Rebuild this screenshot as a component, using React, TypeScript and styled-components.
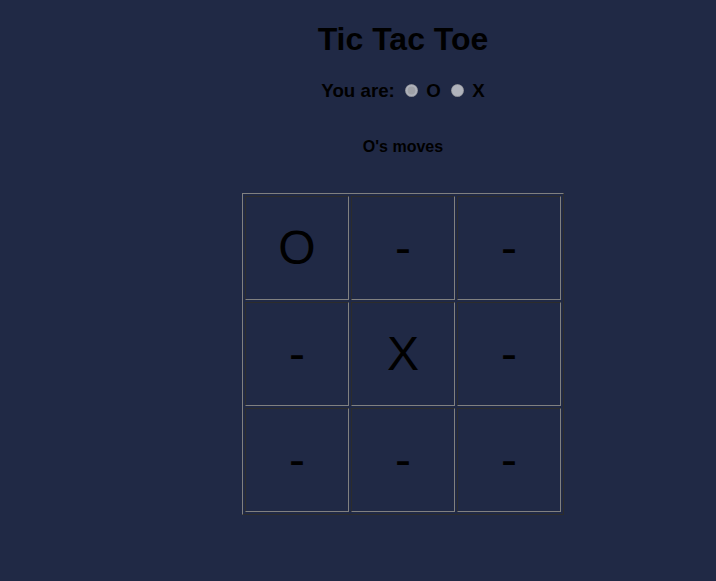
import React, { useState } from 'react';
import styled, { createGlobalStyle } from 'styled-components';

const GlobalStyle = createGlobalStyle`
  body {
    margin: 8px;
    background-color: #202945;
    font-family: "Liberation Sans", Arial, sans-serif;
    color: #000;
  }
`;

const Page = styled.div`
  display: flex;
  flex-direction: column;
  align-items: center;
  padding-left: 90px;
`;

// flex container stops the margin collapsing with body, so take the 8px off here
const Title = styled.h1`
  font-size: 32px;
  font-weight: bold;
  margin: 13.44px 0 21.44px;
`;

const Prompt = styled.h3`
  font-size: 18.72px;
  font-weight: bold;
  margin: 0;
  line-height: normal;
`;

const Radio = styled.input`
  margin: 3px 3px 0 5px;
  width: 13px;
  height: 13px;
`;

const Status = styled.div`
  font-size: 16px;
  font-weight: bold;
  margin-top: 36px;
  margin-bottom: 37px;
`;

const Board = styled.table`
  border: 1px outset grey;
  border-spacing: 2px;
  border-collapse: separate;
`;

const Cell = styled.td`
  width: 100px;
  height: 100px;
  padding: 1px;
  border: 1px inset grey;
  text-align: center;
  vertical-align: middle;
  font-size: 48px;
  font-weight: normal;
  color: #000;
`;

const App = () => {
  const [board] = useState<string[]>(['O', '-', '-', '-', 'X', '-', '-', '-', '-']);
  const rows = [0, 1, 2];

  return (
    <Page>
      <GlobalStyle />
      <Title>Tic Tac Toe</Title>
      <Prompt>
        You are: <Radio type="radio" name="player" checked disabled readOnly /> O{' '}
        <Radio type="radio" name="player" disabled readOnly /> X
      </Prompt>
      <Status>O's moves</Status>
      <Board>
        <tbody>
          {rows.map((r) => (
            <tr key={`row${r}`}>
              {board.slice(r * 3, r * 3 + 3).map((mark, i) => (
                <Cell key={`cell${r * 3 + i}`}>{mark}</Cell>
              ))}
            </tr>
          ))}
        </tbody>
      </Board>
    </Page>
  );
};

export default App;
